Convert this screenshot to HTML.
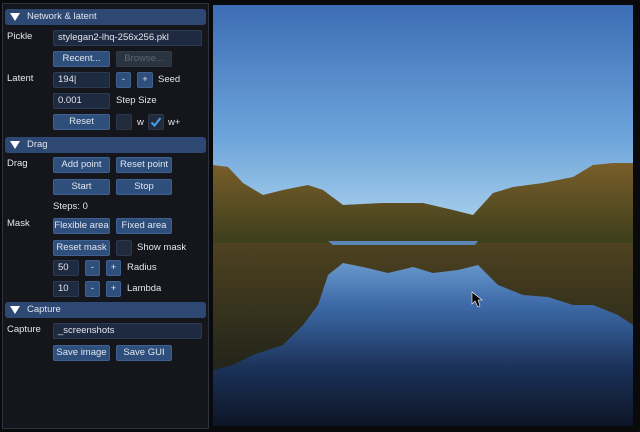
<!DOCTYPE html>
<html><head><meta charset="utf-8"><style>
*{margin:0;padding:0;box-sizing:border-box}
body{width:640px;height:432px;background:#0a0a0c;position:relative;overflow:hidden;font-family:"Liberation Sans",sans-serif;font-size:9.5px;color:#e2e6ee}
.panel{position:absolute;left:2px;top:3px;width:207px;height:426px;background:#15161b;border:1px solid #2e3340}
.a{position:absolute;white-space:nowrap}
.hd{position:absolute;left:5px;width:201px;height:16px;background:#2c4873;border-radius:3px;line-height:16px;white-space:nowrap}
.hd .t{position:absolute;left:5px;top:4px;width:0;height:0;border-left:5px solid transparent;border-right:5px solid transparent;border-top:8px solid #fff}
.hd span{position:absolute;left:22px}
.b{position:absolute;height:16px;background:#2e4e7c;border:1px solid #3f6090;border-radius:2px;text-align:center;line-height:14px;white-space:nowrap;overflow:hidden}
.i{position:absolute;height:16px;background:#1e2a3f;border:1px solid #2c3b55;border-radius:2px;line-height:14px;padding-left:4px;white-space:nowrap;overflow:hidden}
.c{position:absolute;width:16px;height:16px;background:#222b3b;border:1px solid #2c3850;border-radius:2px}
.lbl{position:absolute;left:7px}
</style></head><body>
<div class="panel"></div>
<div class="hd" style="top:9px"><div class="t"></div><span>Network &amp; latent</span></div>
<div class="a lbl" style="top:31px">Pickle</div>
<div class="i" style="left:53px;top:30px;width:149px">stylegan2-lhq-256x256.pkl</div>
<div class="b" style="left:53px;top:51px;width:57px">Recent...</div>
<div class="b" style="left:116px;top:51px;width:56px;background:#2a3340;border-color:#303a48;color:#5e6672">Browse...</div>
<div class="a lbl" style="top:73px">Latent</div>
<div class="i" style="left:53px;top:72px;width:57px">194|</div>
<div class="b" style="left:116px;top:72px;width:15px">-</div>
<div class="b" style="left:137px;top:72px;width:16px">+</div>
<div class="a" style="left:158px;top:74px">Seed</div>
<div class="i" style="left:53px;top:93px;width:57px">0.001</div>
<div class="a" style="left:116px;top:95px">Step Size</div>
<div class="b" style="left:53px;top:114px;width:57px">Reset</div>
<div class="c" style="left:116px;top:114px"></div>
<div class="a" style="left:137px;top:117px">w</div>
<div class="c" style="left:148px;top:114px"><svg width="14" height="14" viewBox="0 0 14 14"><path d="M2.5 7.5 L5.5 10.5 L11.5 3" stroke="#4aa0f0" stroke-width="2" fill="none"/></svg></div>
<div class="a" style="left:168px;top:117px">w+</div>

<div class="hd" style="top:137px"><div class="t"></div><span>Drag</span></div>
<div class="a lbl" style="top:158px">Drag</div>
<div class="b" style="left:53px;top:157px;width:57px">Add point</div>
<div class="b" style="left:116px;top:157px;width:56px">Reset point</div>
<div class="b" style="left:53px;top:179px;width:57px">Start</div>
<div class="b" style="left:116px;top:179px;width:56px">Stop</div>
<div class="a" style="left:53px;top:201px">Steps: 0</div>
<div class="a lbl" style="top:218px">Mask</div>
<div class="b" style="left:53px;top:218px;width:57px">Flexible area</div>
<div class="b" style="left:116px;top:218px;width:56px">Fixed area</div>
<div class="b" style="left:53px;top:240px;width:57px">Reset mask</div>
<div class="c" style="left:116px;top:240px"></div>
<div class="a" style="left:137px;top:242px">Show mask</div>
<div class="i" style="left:53px;top:260px;width:26px">50</div>
<div class="b" style="left:85px;top:260px;width:15px">-</div>
<div class="b" style="left:106px;top:260px;width:15px">+</div>
<div class="a" style="left:127px;top:262px">Radius</div>
<div class="i" style="left:53px;top:281px;width:26px">10</div>
<div class="b" style="left:85px;top:281px;width:15px">-</div>
<div class="b" style="left:106px;top:281px;width:15px">+</div>
<div class="a" style="left:127px;top:283px">Lambda</div>

<div class="hd" style="top:302px"><div class="t"></div><span>Capture</span></div>
<div class="a lbl" style="top:324px">Capture</div>
<div class="i" style="left:53px;top:323px;width:149px">_screenshots</div>
<div class="b" style="left:53px;top:345px;width:57px">Save image</div>
<div class="b" style="left:116px;top:345px;width:56px">Save GUI</div>

<svg style="position:absolute;left:213px;top:5px" width="420" height="421" viewBox="0 0 420 421">
<defs>
<linearGradient id="sky" x1="0" y1="0" x2="0" y2="1"><stop offset="0" stop-color="#3d6db5"/><stop offset="0.55" stop-color="#6ba3da"/><stop offset="1" stop-color="#b4d8ee"/></linearGradient>
<linearGradient id="wat" x1="0" y1="0" x2="0" y2="1"><stop offset="0" stop-color="#7fb0e0"/><stop offset="0.35" stop-color="#3d6aa8"/><stop offset="0.7" stop-color="#1a3056"/><stop offset="1" stop-color="#0d1526"/></linearGradient>
<linearGradient id="tr" x1="0" y1="0" x2="0" y2="1"><stop offset="0" stop-color="#7a5e2a"/><stop offset="1" stop-color="#3c3e1c"/></linearGradient>
<linearGradient id="rf" x1="0" y1="0" x2="0" y2="1"><stop offset="0" stop-color="#4e4220"/><stop offset="1" stop-color="#22241a"/></linearGradient>
</defs>
<rect width="420" height="236" fill="url(#sky)"/>
<rect y="235" width="420" height="186" fill="url(#wat)"/>
<path d="M0 160 L15 162 L30 178 L50 190 L70 185 L95 180 L110 185 L130 200 L170 198 L210 198 L240 205 L260 210 L280 188 L300 182 L330 178 L360 172 L380 160 L400 158 L420 158 L420 238 L0 238 Z" fill="url(#tr)"/>
<path d="M0 238 L420 238 L420 320 L405 310 L380 300 L360 300 L335 292 L310 290 L285 280 L265 260 L245 265 L220 268 L200 262 L175 268 L150 262 L130 258 L115 270 L105 300 L90 320 L70 340 L40 350 L20 360 L0 365 Z" fill="url(#rf)"/>
<path d="M115 236 L265 236 L262 240 L120 240 Z" fill="#5a86b8"/>
<path d="M259 287 L259 299 L262 296 L265 302 L267 301 L265 295 L269 295 Z" fill="#000" stroke="#fff" stroke-width="0.6"/>
</svg>
</body></html>
